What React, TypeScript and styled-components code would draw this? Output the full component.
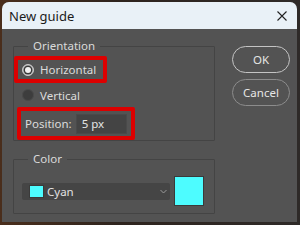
import styled, { createGlobalStyle } from "styled-components";

const GlobalStyle = createGlobalStyle`
  html, body {
    margin: 0;
    padding: 0;
    background: #3a2a1f;
  }
  body {
    font-family: "Noto Sans", "Open Sans", sans-serif;
  }
`;

const Screen = styled.div`
  width: 300px;
  height: 225px;
  padding: 2px 3px 3px 2px;
  box-sizing: border-box;
  background: linear-gradient(90deg, #4a2e1c, #2e241e 40%, #2e2a28);
  overflow: hidden;
`;

const Dialog = styled.div`
  width: 295px;
  height: 220px;
  display: flex;
  flex-direction: column;
  background: #535353;
  border-radius: 7px 7px 0 0;
  overflow: hidden;
`;

const TitleBar = styled.div`
  height: 27px;
  flex: none;
  display: flex;
  align-items: center;
  justify-content: space-between;
  padding: 0 10px 0 7px;
  background: #e9f1f7;
  color: #1b1b1b;
  font-size: 13px;
`;

const CloseIcon = () => (
  <svg width="10" height="10" viewBox="0 0 10 10">
    <path d="M0.5 0.5 L9.5 9.5 M9.5 0.5 L0.5 9.5" stroke="#222" strokeWidth="1.1" />
  </svg>
);

const Body = styled.div`
  flex: 1;
  display: flex;
  padding: 10px 0 0 11px;
  color: #dcdcdc;
  font-size: 11.5px;
`;

const LeftColumn = styled.div`
  display: flex;
  flex-direction: column;
  gap: 11px;
  width: 202px;
`;

const Group = styled.fieldset`
  margin: 0;
  padding: 3px 0 0 0;
  min-width: 0;
  border: 1px solid #444444;
  border-radius: 1px;
  display: flex;
  flex-direction: column;
`;

const Legend = styled.legend`
  padding: 0 5px;
  margin-left: 14px;
  line-height: 14px;
  color: #dadada;
`;

const OptionRow = styled.div<{ $marked?: boolean; $width?: number; $height: number; $inset?: number; $gap?: number }>`
  display: flex;
  align-items: center;
  gap: ${({ $gap }) => $gap ?? 6}px;
  box-sizing: border-box;
  height: ${({ $height }) => $height}px;
  width: ${({ $width }) => ($width ? `${$width}px` : "auto")};
  margin-left: ${({ $inset }) => $inset || 0}px;
  padding-left: ${({ $marked }) => ($marked ? 4 : 8)}px;
  border: ${({ $marked }) => ($marked ? "4px solid #dc0000" : "none")};
  border-radius: 2px;
`;

const Radio = styled.span<{ $checked?: boolean }>`
  width: 12px;
  height: 12px;
  border-radius: 50%;
  box-sizing: border-box;
  flex: none;
  display: flex;
  align-items: center;
  justify-content: center;
  background: ${({ $checked }) => ($checked ? "#c9c9c9" : "#3d3d3d")};
  border: 1px solid ${({ $checked }) => ($checked ? "#c9c9c9" : "#4a4a4a")};
  &::after {
    content: "";
    display: ${({ $checked }) => ($checked ? "block" : "none")};
    width: 6px;
    height: 6px;
    border-radius: 50%;
    background: #f2f2f2;
    box-shadow: 0 0 0 1.5px #3b3b3b;
  }
`;

const Label = styled.span`
  white-space: nowrap;
`;

const NumberField = styled.div`
  width: 51px;
  height: 20px;
  box-sizing: border-box;
  display: flex;
  align-items: center;
  padding-left: 5px;
  background: #444444;
  border: 1px solid #4a4a4a;
  color: #e4e4e4;
`;

const ColorRow = styled.div`
  display: flex;
  align-items: center;
  gap: 4px;
  padding: 7px 0 7px 8px;
`;

const Select = styled.div`
  width: 148px;
  height: 17px;
  box-sizing: border-box;
  display: flex;
  align-items: center;
  gap: 3px;
  padding: 0 3px 0 7px;
  background: #454545;
  border-radius: 2px;
  color: #e2e2e2;
`;

const Chip = styled.span<{ $size: number; $tall?: number }>`
  width: ${({ $size }) => $size}px;
  height: ${({ $tall, $size }) => $tall || $size}px;
  flex: none;
  background: #4dfcff;
  border: 1px solid #3a3a3a;
  box-sizing: border-box;
`;

const SelectText = styled.span`
  flex: 1;
`;

const Chevron = () => (
  <svg width="7" height="5" viewBox="0 0 7 5">
    <path d="M0.5 1 L3.5 4 L6.5 1" stroke="#9a9a9a" fill="none" strokeWidth="1" />
  </svg>
);

const RightColumn = styled.div`
  display: flex;
  flex-direction: column;
  gap: 6px;
  padding: 7px 0 0 17px;
`;

const PillButton = styled.button<{ $primary?: boolean }>`
  width: 58px;
  height: 27px;
  border-radius: 14px;
  background: #535353;
  border: ${({ $primary }) => ($primary ? "1.5px solid #c4c4c4" : "1px solid #8c8c8c")};
  color: #e6e6e6;
  font-family: "Noto Sans", "Open Sans", sans-serif;
  font-size: 11.5px;
  padding: 0;
`;

export default function App() {
  return (
    <Screen>
      <GlobalStyle />
      <Dialog>
        <TitleBar>
          <span>New guide</span>
          <CloseIcon />
        </TitleBar>
        <Body>
          <LeftColumn>
            <Group>
              <Legend>Orientation</Legend>
              <OptionRow $marked $width={93} $height={27}>
                <Radio $checked />
                <Label>Horizontal</Label>
              </OptionRow>
              <OptionRow $height={24}>
                <Radio />
                <Label>Vertical</Label>
              </OptionRow>
              <OptionRow $marked $width={118} $height={33} $inset={3} $gap={4}>
                <Label>Position:</Label>
                <NumberField>5 px</NumberField>
              </OptionRow>
            </Group>
            <Group>
              <Legend>Color</Legend>
              <ColorRow>
                <Select>
                  <Chip $size={15} $tall={13} />
                  <SelectText>Cyan</SelectText>
                  <Chevron />
                </Select>
                <Chip $size={30} />
              </ColorRow>
            </Group>
          </LeftColumn>
          <RightColumn>
            <PillButton $primary>OK</PillButton>
            <PillButton>Cancel</PillButton>
          </RightColumn>
        </Body>
      </Dialog>
    </Screen>
  );
}
